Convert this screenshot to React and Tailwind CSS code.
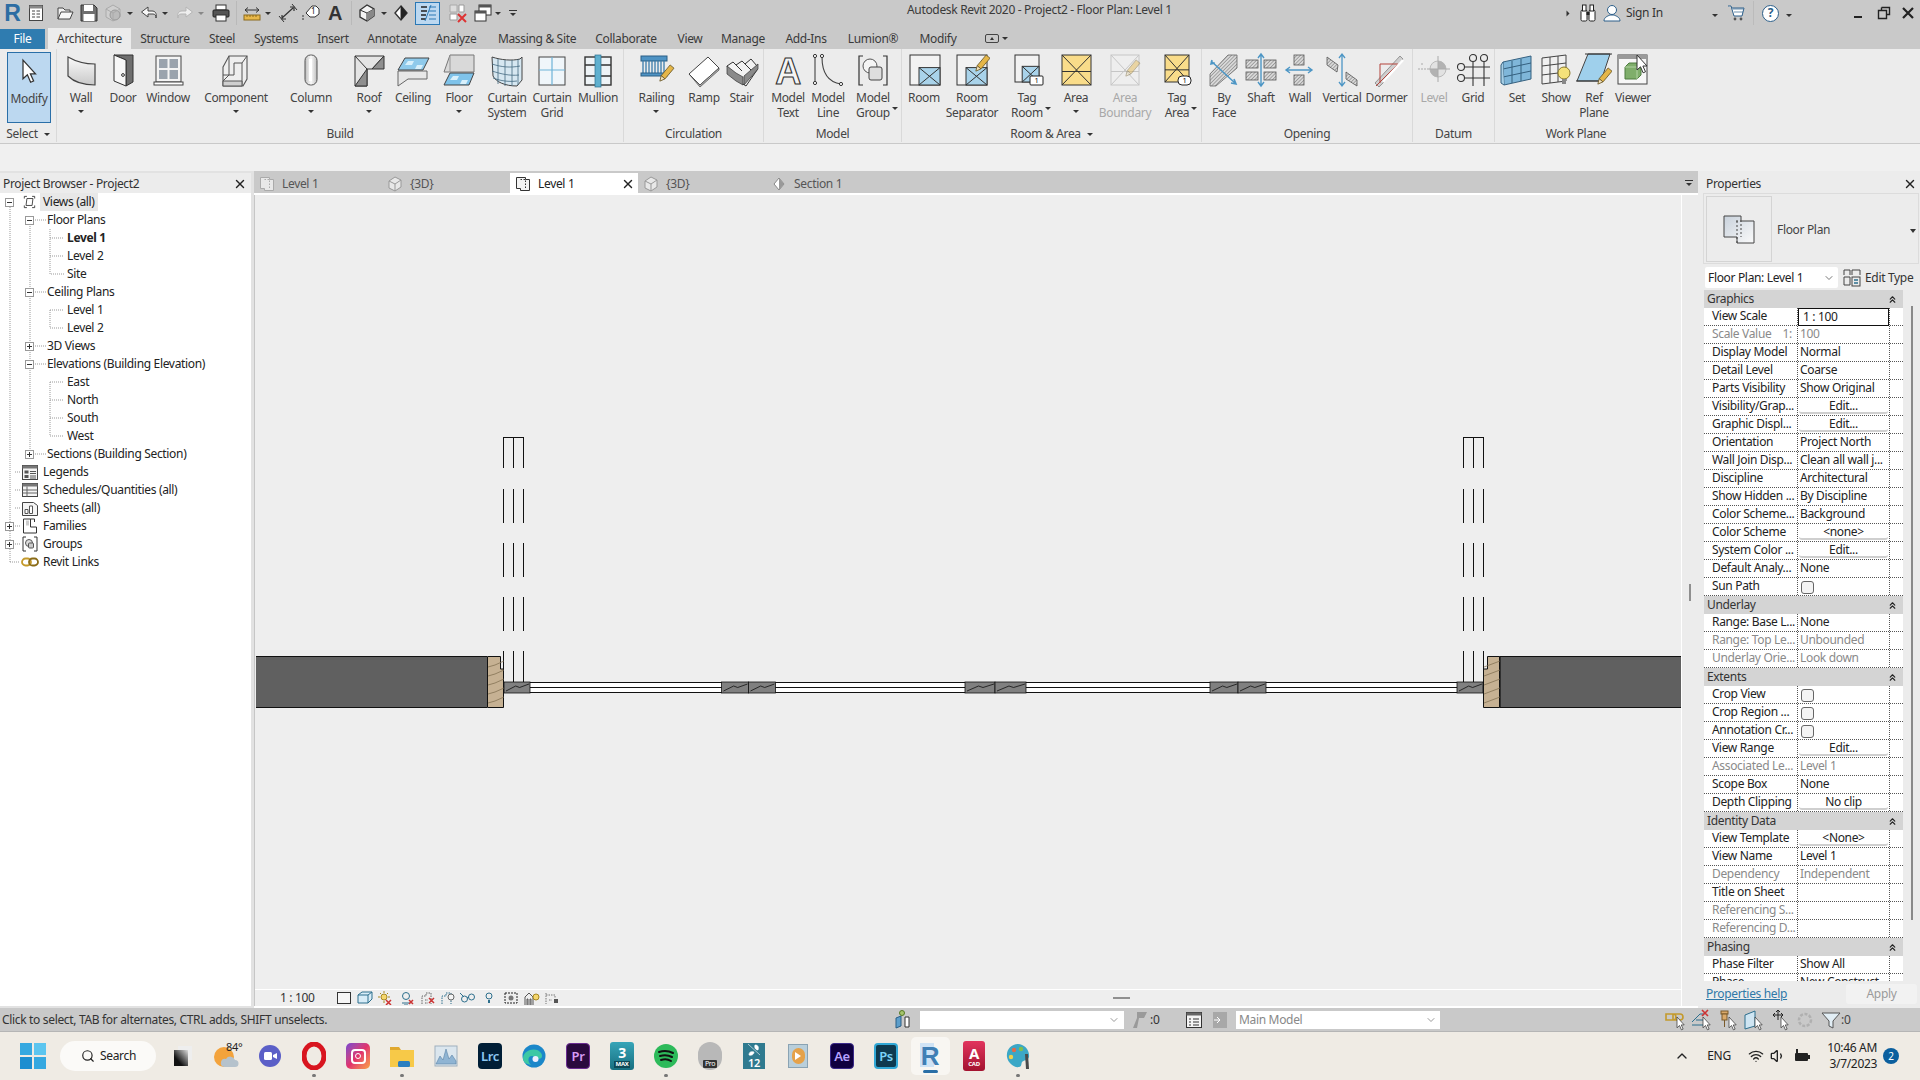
import { X, ChevronDown, ChevronUp, Search, Wifi, Volume1, ChevronsUp } from 'lucide-react'

// small shared bits for the svg icons
const Ico = ({ children, s = 36, v = 36, className = '' }) => (
  <svg width={s} height={s} viewBox={`0 0 ${v} ${v}`} className={`shrink-0 ${className}`}>{children}</svg>
)
const Pencil = ({ x = 0, y = 0 }) => (
  <g transform={`translate(${x} ${y}) rotate(40)`}>
    <rect x="-2.5" y="-11" width="5" height="14" fill="#e5b648" stroke="#6b5a2a" strokeWidth="0.8" />
    <path d="M-2.5 3L0 8l2.5-5z" fill="#f3e2bd" stroke="#6b5a2a" strokeWidth="0.8" />
  </g>
)
const Tag = ({ x, y, round }) => (
  <g>
    <rect x={x} y={y} width="13" height="9" rx={round ? 4 : 1} fill="#fff" stroke="#222" />
    <text x={x + 6.5} y={y + 7.2} fontSize="7.5" textAnchor="middle" fill="#111">1</text>
  </g>
)
const Hatch = (props) => <rect fill="url(#hatch)" stroke="#555" strokeWidth="0.8" {...props} />
const Cursor = ({ x = 0, y = 0, s = 1 }) => (
  <path transform={`translate(${x} ${y}) scale(${s})`} d="M0 0v15l3.5-3.2 2.6 6 2.4-1-2.6-5.8H10z" fill="#fff" stroke="#333" strokeWidth="1" />
)

const RoomBox = ({ x = 5, y = 4, w = 28, h = 29 }) => (
  <g>
    <rect x={x} y={y} width={w} height={h} fill="#f2f2f2" stroke="#333" />
    <rect x={x + w * 0.3} y={y + h * 0.42} width={w * 0.7} height={h * 0.58} fill="#a9d3ea" stroke="#333" />
    <path d={`M${x + w * 0.3} ${y + h * 0.42}L${x + w} ${y + h}M${x + w} ${y + h * 0.42}L${x + w * 0.3} ${y + h}`} stroke="#333" fill="none" />
  </g>
)
const AreaBox = ({ x = 5, y = 4, w = 28, h = 29, fill = '#f9dc8a', line = '#333' }) => (
  <g fill="none" stroke={line}>
    <rect x={x} y={y} width={w} height={h} fill={fill} />
    <path d={`M${x} ${y}L${x + w} ${y + h}M${x + w} ${y}L${x} ${y + h}M${x} ${y + h * 0.55}H${x + w}`} />
  </g>
)

const icons = {
  wall: <Ico><path d="M5 5c7 4 17 7 27 7v21c-10 0-21-3-27-9z" fill="url(#gl)" stroke="#444" strokeWidth="1.2" /></Ico>,
  door: (
    <Ico>
      <path d="M9 3h19v27l-7 4V8z" fill="#6e6e6e" stroke="#333" />
      <path d="M9 3l12 5v26L9 29z" fill="#f7f7f7" stroke="#333" />
      <circle cx="18" cy="23" r="1.4" fill="none" stroke="#333" />
    </Ico>
  ),
  window: (
    <Ico>
      <rect x="6" y="4" width="25" height="26" fill="#f4f4f4" stroke="#444" />
      <path d="M9 7h8.5v9H9zM19.5 7H28v9h-8.5zM9 18h8.5v9H9zM19.5 18H28v9h-8.5z" fill="#9aa3ad" />
      <rect x="4" y="30" width="29" height="3" fill="#fff" stroke="#444" />
    </Ico>
  ),
  component: (
    <Ico>
      <path d="M5 15l6-11h18v23l-4 7H5z" fill="#efefef" stroke="#555" strokeWidth="1.1" />
      <path d="M11 4v19H5M11 23l-6 6M24 11l5-7M24 11v23M24 11h-8v12h-5" fill="none" stroke="#555" />
      <path d="M5 29h19v5H5z" fill="#cfcfcf" stroke="#555" />
    </Ico>
  ),
  column: (
    <Ico>
      <rect x="12" y="3" width="12" height="30" rx="5.5" fill="url(#gh)" stroke="#555" />
      <rect x="16" y="7" width="3" height="22" fill="#fff" />
    </Ico>
  ),
  roof: (
    <Ico>
      <path d="M4 4h29L21 17l-5 0v17H4z" fill="#e4e4e4" stroke="#333" />
      <path d="M16 17l-12 17h12zM33 4v13l-12 0z" fill="#8f8f8f" stroke="#333" />
      <path d="M4 4l12 13" stroke="#333" />
    </Ico>
  ),
  ceiling: (
    <Ico>
      <path d="M3 19v15l10-7h19V19z" fill="#e7e7e7" stroke="#666" />
      <path d="M10 6h24l-6 12H3z" fill="#8fcaeb" stroke="#444" />
      <path d="M13 9h6l-2 4h-7zM22 13h6l-2 4h-6z" fill="#d8f0fb" />
    </Ico>
  ),
  floor: (
    <Ico>
      <path d="M9 3h24v17H3z" fill="#d9d9d9" stroke="#777" />
      <path d="M9 3v17" stroke="#999" />
      <path d="M9 21h24l-5 12H3z" fill="#7fc3ea" stroke="#444" />
      <path d="M12 24h6l-2 4h-7zM21 28h6l-2 4h-6z" fill="#d8f0fb" />
    </Ico>
  ),
  curtainSys: (
    <Ico>
      <path d="M3 5c9 3 20 4 28 2l2-2v23l-5 6C16 34 7 30 4 24z" fill="#d6e7f1" stroke="#444" />
      <path d="M9 7v25M16 8v26M23 8v26M29 7v26M3 12c9 3 18 4 28 2M3 19c9 3 18 5 27 4M4 26c8 3 16 4 24 3" fill="none" stroke="#446a80" strokeWidth="0.8" />
    </Ico>
  ),
  curtainGrid: (
    <Ico>
      <rect x="5" y="5" width="26" height="28" fill="#f0f6fa" stroke="#444" />
      <path d="M18 5v28M5 18h26" stroke="#6eb3d8" strokeWidth="1.2" />
    </Ico>
  ),
  mullion: (
    <Ico>
      <rect x="5" y="5" width="26" height="28" fill="#eef3f6" stroke="#333" strokeWidth="1.4" />
      <path d="M5 13h26M5 24h26" stroke="#333" strokeWidth="1.4" />
      <rect x="15" y="3" width="6" height="32" fill="#5fb0cf" stroke="#2d6f8d" strokeWidth="0.7" />
    </Ico>
  ),
  railing: (
    <Ico>
      <rect x="2" y="4" width="26" height="5" fill="#4e93c4" stroke="#2b5f85" />
      <path d="M4 9v12M7 9v12M10 9v12M13 9v12M16 9v12M19 9v12M22 9v12M25 9v12" stroke="#3a7cab" strokeWidth="1.3" />
      <rect x="2" y="21" width="26" height="3" fill="#4e93c4" stroke="#2b5f85" />
      <Pencil x="26" y="23" />
    </Ico>
  ),
  ramp: (
    <Ico>
      <path d="M3 22L22 5l11 11-19 17z" fill="#fff" stroke="#444" />
      <path d="M3 22l11 11 19-17v2L14 35z" fill="#b5b5b5" stroke="#444" strokeWidth="0.7" />
    </Ico>
  ),
  stair: (
    <Ico>
      <path d="M3 14l6-4 3 3 6-4 3 3 6-5 6 7v4l-11 16-6-4-9-7z" fill="#f2f2f2" stroke="#333" />
      <path d="M3 14v8l9 7 7 4v-8l-7-4zM20 24v9l14-16v-5z" fill="#8a8a8a" stroke="#333" strokeWidth="0.7" />
      <path d="M9 10l9 9M18 9l9 9" stroke="#333" fill="none" />
    </Ico>
  ),
  modelText: (
    <Ico s={36} v={36}>
      <text x="18" y="32" textAnchor="middle" fontSize="36" fontFamily="Liberation Sans, sans-serif" fontWeight="700" fill="#f5f5f5" stroke="#333" strokeWidth="1.1">A</text>
    </Ico>
  ),
  modelLine: (
    <Ico>
      <path d="M5 5v24M12 5c0 14 5 25 19 27" fill="none" stroke="#444" strokeWidth="1.1" />
      <circle cx="5" cy="4" r="1.6" fill="#fff" stroke="#333" />
      <circle cx="5" cy="31" r="1.6" fill="#fff" stroke="#333" />
      <circle cx="12" cy="4" r="1.6" fill="#fff" stroke="#333" />
      <circle cx="31" cy="32" r="1.6" fill="#fff" stroke="#333" />
    </Ico>
  ),
  modelGroup: (
    <Ico>
      <path d="M8 4H4v29h4M28 4h4v29h-4" fill="none" stroke="#333" strokeWidth="1.2" />
      <circle cx="15" cy="14" r="7" fill="#f5f5f5" stroke="#555" />
      <rect x="14" y="15" width="13" height="13" rx="2" fill="#dedede" stroke="#444" />
    </Ico>
  ),
  room: <Ico><RoomBox x={4} y={3} w={30} h={30} /></Ico>,
  roomSep: (
    <Ico>
      <RoomBox x={3} y={3} w={30} h={30} />
      <Pencil x="27" y="13" />
    </Ico>
  ),
  tagRoom: (
    <Ico>
      <RoomBox x={6} y={3} w={24} h={27} />
      <Tag x={21} y={24} />
    </Ico>
  ),
  area: <Ico><AreaBox x={4} y={3} w={29} h={30} /></Ico>,
  areaB: (
    <Ico>
      <AreaBox x={4} y={3} w={28} h={30} fill="#eeeeee" line="#c6c6c6" />
      <g opacity="0.45"><Pencil x="24" y="18" /></g>
    </Ico>
  ),
  tagArea: (
    <Ico>
      <AreaBox x={6} y={3} w={24} h={27} />
      <Tag x={19} y={24} round />
    </Ico>
  ),
  byFace: (
    <Ico>
      <path d="M22 3h9v13L10 34H4V22z" fill="url(#hatch)" stroke="#666" strokeWidth="0.8" />
      <path d="M5 9l24 22M6 8l-1 4 4-1M28 27l2 5-5-1" fill="none" stroke="#4d96c5" strokeWidth="1.6" />
    </Ico>
  ),
  shaft: (
    <Ico>
      <Hatch x="3" y="8" width="12" height="8" />
      <Hatch x="21" y="8" width="12" height="8" />
      <Hatch x="3" y="20" width="12" height="8" />
      <Hatch x="21" y="20" width="12" height="8" />
      <path d="M18 3v30M15 6l3-4 3 4M15 30l3 4 3-4" fill="none" stroke="#4d96c5" strokeWidth="1.4" />
    </Ico>
  ),
  wallO: (
    <Ico>
      <Hatch x="12" y="3" width="10" height="10" />
      <Hatch x="12" y="23" width="10" height="10" />
      <path d="M5 18h24M8 15l-4 3 4 3M26 15l4 3-4 3" fill="none" stroke="#4d96c5" strokeWidth="1.4" />
    </Ico>
  ),
  vertical: (
    <Ico>
      <path d="M3 5l11 8-1 7L3 13zM22 20l11 8v6l-11-7z" fill="url(#hatch)" stroke="#555" strokeWidth="0.8" />
      <path d="M18 3v30M15 6l3-4 3 4M15 30l3 4 3-4" fill="none" stroke="#4d96c5" strokeWidth="1.3" />
    </Ico>
  ),
  dormer: (
    <Ico>
      <path d="M6 31L31 4l3 3-19 23-5 5z" fill="#cfcfcf" stroke="#777" strokeWidth="0.7" />
      <path d="M11 12h18L7 34M11 12v19" fill="none" stroke="#b3433a" />
      <path d="M14 30L34 8" stroke="#fff" strokeWidth="2.5" />
    </Ico>
  ),
  level: (
    <Ico>
      <path d="M2 17h9M6 11v3" stroke="#aaa" strokeDasharray="2 1" />
      <circle cx="22" cy="17" r="8" fill="#e2e2e2" stroke="#bbb" />
      <path d="M22 9a8 8 0 0 1 8 8h-8zM22 17h-8a8 8 0 0 0 8 8z" fill="#b2b2b2" />
      <path d="M22 4v26M11 17h23" stroke="#aaa" />
    </Ico>
  ),
  grid: (
    <Ico>
      <g fill="none" stroke="#333" strokeWidth="1.1">
        <circle cx="18" cy="6" r="3.5" /><circle cx="29" cy="6" r="3.5" />
        <circle cx="6" cy="15" r="3.5" /><circle cx="6" cy="26" r="3.5" />
        <path d="M18 10v24M29 10v24M10 15h25M10 26h25" />
      </g>
    </Ico>
  ),
  set: (
    <Ico>
      <path d="M4 10l28-6v23L5 33z" fill="#7fb6d9" stroke="#35607f" />
      <path d="M13 9v22M22 7v22M4 17l28-6M4 25l28-6" stroke="#35607f" />
      <path d="M4 10l-2 3v18l3 2" fill="#a7cfe6" stroke="#35607f" />
    </Ico>
  ),
  show: (
    <Ico>
      <path d="M4 6l24-3v26L4 32z" fill="#f0f0f0" stroke="#444" />
      <path d="M12 5v26M20 4v26M4 14l24-3M4 23l24-3" stroke="#444" />
      <circle cx="26" cy="21" r="6" fill="#f5e27a" stroke="#8b7a2a" />
      <rect x="24" y="27" width="4" height="5" fill="#888" />
    </Ico>
  ),
  refPlane: (
    <Ico>
      <path d="M12 2h22l-9 27H1z" fill="#9fd0ec" stroke="#444" />
      <path d="M9 2h28M-1 29h28" stroke="#333" />
      <Pencil x="27" y="26" />
    </Ico>
  ),
  viewer: (
    <Ico>
      <rect x="3" y="3" width="29" height="29" fill="#f7f7f7" stroke="#444" />
      <rect x="3" y="3" width="29" height="4" fill="#9a9a9a" />
      <path d="M10 15l4-4h12v12l-4 4H10z" fill="#7fae6b" stroke="#4f7d40" />
      <path d="M10 15h12v12M22 15l4-4" fill="none" stroke="#b3d3a5" />
      <Cursor x="22" y="3" s="1" />
    </Ico>
  ),
}

const panels = [
  {
    title: 'Build', w: 'w-[567px]',
    tools: [
      { k: 'wall', l: ['Wall'], w: 'w-[48px]', arrow: true },
      { k: 'door', l: ['Door'], w: 'w-[36px]' },
      { k: 'window', l: ['Window'], w: 'w-[54px]' },
      { k: 'component', l: ['Component'], w: 'w-[82px]', arrow: true },
      { k: 'column', l: ['Column'], w: 'w-[68px]', arrow: true },
      { k: 'roof', l: ['Roof'], w: 'w-[48px]', arrow: true },
      { k: 'ceiling', l: ['Ceiling'], w: 'w-[40px]' },
      { k: 'floor', l: ['Floor'], w: 'w-[52px]', arrow: true },
      { k: 'curtainSys', l: ['Curtain', 'System'], w: 'w-[44px]' },
      { k: 'curtainGrid', l: ['Curtain', 'Grid'], w: 'w-[46px]' },
      { k: 'mullion', l: ['Mullion'], w: 'w-[46px]' },
    ],
  },
  {
    title: 'Circulation', w: 'w-[140px]',
    tools: [
      { k: 'railing', l: ['Railing'], w: 'w-[65px]', arrow: true },
      { k: 'ramp', l: ['Ramp'], w: 'w-[30px]' },
      { k: 'stair', l: ['Stair'], w: 'w-[45px]' },
    ],
  },
  {
    title: 'Model', w: 'w-[138px]',
    tools: [
      { k: 'modelText', l: ['Model', 'Text'], w: 'w-[48px]' },
      { k: 'modelLine', l: ['Model', 'Line'], w: 'w-[32px]' },
      { k: 'modelGroup', l: ['Model', 'Group'], w: 'w-[58px]', side: true },
    ],
  },
  {
    title: 'Room & Area', w: 'w-[300px]', more: true,
    tools: [
      { k: 'room', l: ['Room'], w: 'w-[44px]' },
      { k: 'roomSep', l: ['Room', 'Separator'], w: 'w-[52px]' },
      { k: 'tagRoom', l: ['Tag', 'Room'], w: 'w-[58px]', side: true },
      { k: 'area', l: ['Area'], w: 'w-[40px]', arrow: true },
      { k: 'areaB', l: ['Area', 'Boundary'], w: 'w-[58px]', dim: true },
      { k: 'tagArea', l: ['Tag', 'Area'], w: 'w-[46px]', side: true },
    ],
  },
  {
    title: 'Opening', w: 'w-[211px]',
    tools: [
      { k: 'byFace', l: ['By', 'Face'], w: 'w-[44px]' },
      { k: 'shaft', l: ['Shaft'], w: 'w-[30px]' },
      { k: 'wallO', l: ['Wall'], w: 'w-[48px]' },
      { k: 'vertical', l: ['Vertical'], w: 'w-[36px]' },
      { k: 'dormer', l: ['Dormer'], w: 'w-[53px]' },
    ],
  },
  {
    title: 'Datum', w: 'w-[82px]',
    tools: [
      { k: 'level', l: ['Level'], w: 'w-[42px]', dim: true },
      { k: 'grid', l: ['Grid'], w: 'w-[36px]' },
    ],
  },
  {
    title: 'Work Plane', w: 'w-[162px]', last: true,
    tools: [
      { k: 'set', l: ['Set'], w: 'w-[44px]' },
      { k: 'show', l: ['Show'], w: 'w-[34px]' },
      { k: 'refPlane', l: ['Ref', 'Plane'], w: 'w-[42px]' },
      { k: 'viewer', l: ['Viewer'], w: 'w-[36px]' },
    ],
  },
]

const Tri = ({ className = 'border-t-[#333]' }) => (
  <span className={`inline-block w-0 h-0 border-x-[3px] border-x-transparent border-t-[3px] ${className}`} />
)

const Tool = ({ tool }) => (
  <div className={`${tool.w} flex flex-col items-center pt-[3px] shrink-0 ${tool.dim ? 'text-[#a8a8a8]' : ''}`}>
    <div className="h-[36px] flex items-center justify-center">{icons[tool.k]}</div>
    <div className="mt-[2px] flex flex-col items-center leading-[15px] whitespace-nowrap relative">
      {tool.l.map((t) => <span key={t}>{t}</span>)}
      {tool.arrow && <span className="leading-[10px] -mt-[1px]"><Tri /></span>}
      {tool.side && <span className="absolute -right-[8px] top-[14px] leading-[4px]"><Tri /></span>}
    </div>
  </div>
)

const qatIcons = {
  sheet: <svg width="18" height="18" viewBox="0 0 18 18"><rect x="2.5" y="1.5" width="13" height="15" fill="#fff" stroke="#444" /><rect x="2.5" y="1.5" width="13" height="3" fill="#888" /><path d="M5 7h3M9.5 7H13M5 10h3M9.5 10H13M5 13h3M9.5 13H13" stroke="#444" /></svg>,
  open: <svg width="18" height="18" viewBox="0 0 18 18"><path d="M2 15V4h5l2 2h5v2" fill="#f1f1f1" stroke="#444" /><path d="M2 15l3-7h12l-3 7z" fill="#f7f7f7" stroke="#444" /></svg>,
  save: <svg width="20" height="20" viewBox="0 0 20 20"><path d="M2 2h13l3 3v13H2z" fill="#6f6f6f" stroke="#333" /><rect x="5" y="2" width="9" height="6" fill="#fff" /><rect x="4.5" y="11" width="11" height="7" fill="#fff" /></svg>,
  sync: <svg width="20" height="20" viewBox="0 0 20 20"><path d="M3 6l7-4 7 4v8l-7 4-7-4z" fill="#cfcfcf" stroke="#aaa" /><circle cx="12" cy="12" r="5" fill="#bbb" stroke="#999" /><path d="M3 6l7 4 7-4M10 10v8" stroke="#aaa" fill="none" /></svg>,
  undo: <svg width="18" height="18" viewBox="0 0 18 18"><path d="M8 3L1.5 8 8 13v-3h5c2 0 3 1.5 3 4 1-5-1-7-4-7H8z" fill="#f7f7f7" stroke="#444" /></svg>,
  redo: <svg width="18" height="18" viewBox="0 0 18 18"><path d="M10 3l6.5 5L10 13v-3H5c-2 0-3 1.5-3 4-1-5 1-7 4-7h4z" fill="#eee" stroke="#b5b5b5" /></svg>,
  print: <svg width="20" height="20" viewBox="0 0 20 20"><rect x="5" y="2" width="10" height="5" fill="#fff" stroke="#333" /><rect x="2" y="7" width="16" height="7" rx="1" fill="#555" stroke="#222" /><rect x="5" y="12" width="10" height="6" fill="#fff" stroke="#333" /></svg>,
  measure: <svg width="20" height="20" viewBox="0 0 20 20"><path d="M3 7h14M3 7l3-2.5M3 7l3 2.5M17 7l-3-2.5M17 7l-3 2.5" stroke="#333" fill="none" /><rect x="2" y="12" width="16" height="5" fill="#e8b84a" stroke="#8c6a1c" /><path d="M5 12v2M8 12v2M11 12v2M14 12v2" stroke="#8c6a1c" /></svg>,
  dim: <svg width="20" height="20" viewBox="0 0 20 20"><path d="M4 15L15 5M12 4h4v4M8 16H4v-4" fill="none" stroke="#333" strokeWidth="1.2" /><path d="M1 13l5 6M14 1l5 6" stroke="#333" /></svg>,
  tag: <svg width="20" height="20" viewBox="0 0 20 20"><path d="M2 17v-5" stroke="#333" strokeDasharray="2 1" /><path d="M5 10l6-7h4l3 3v5l-4 3H9z" fill="#fff" stroke="#333" /><text x="12" y="11" fontSize="8" textAnchor="middle" fill="#111">1</text></svg>,
  box: <svg width="20" height="20" viewBox="0 0 20 20"><path d="M3 7l7-5 7 4v7l-7 5-7-4z" fill="#f4f4f4" stroke="#333" strokeWidth="1.3" /><path d="M3 7l7 3 7-4M10 10v8" stroke="#333" fill="none" /><path d="M10 10l7-4v7l-7 5z" fill="#888" /></svg>,
  section: <svg width="20" height="20" viewBox="0 0 20 20"><path d="M10 3l6 7-6 7-6-7z" fill="#fff" stroke="#333" strokeWidth="1.4" /><path d="M10 3v14" stroke="#333" /><path d="M10 3l6 7-6 7z" fill="#222" /></svg>,
  hide: <svg width="20" height="20" viewBox="0 0 20 20"><path d="M2 2h7v7H2z" fill="#ddd" stroke="#aaa" /><path d="M11 2h5v7h-5zM2 11h7v6H2z" fill="#fff" stroke="#999" /><path d="M10 11l8 8M18 11l-8 8" stroke="#d33" strokeWidth="2" /></svg>,
  windows: <svg width="20" height="20" viewBox="0 0 20 20"><rect x="6" y="2" width="12" height="10" fill="#fff" stroke="#333" /><rect x="6" y="2" width="12" height="2.5" fill="#555" /><rect x="2" y="8" width="11" height="10" fill="#fff" stroke="#333" /><rect x="2" y="8" width="11" height="2.5" fill="#555" /></svg>,
}

const Qat = ({ className, children }) => (
  <div className={`flex items-center justify-center shrink-0 ${className}`}>{children}</div>
)

const TitleBar = () => (
  <div className="h-[28px] bg-[#c9c9c9] flex items-start shrink-0">
    <div className="w-[907px] h-[26px] flex items-center shrink-0">
      <Qat className="w-[24px] pl-[1px]">
        <span className="font-['Liberation_Sans',sans-serif] font-bold text-[23px] text-[#2d6da3] leading-none">R</span>
      </Qat>
      <Qat className="w-[24px]">{qatIcons.sheet}</Qat>
      <Qat className="w-[20px] ml-[7px]">{qatIcons.open}</Qat>
      <Qat className="w-[20px] ml-[4px]">{qatIcons.save}</Qat>
      <Qat className="w-[20px] ml-[4px]">{qatIcons.sync}</Qat>
      <Qat className="w-[6px] ml-[4px]"><Tri /></Qat>
      <Qat className="w-[20px] ml-[6px]">{qatIcons.undo}</Qat>
      <Qat className="w-[6px] ml-[3px]"><Tri /></Qat>
      <Qat className="w-[20px] ml-[7px]">{qatIcons.redo}</Qat>
      <Qat className="w-[6px] ml-[3px]"><Tri className="border-t-[#888]" /></Qat>
      <Qat className="w-[20px] ml-[7px]">{qatIcons.print}</Qat>
      <div className="w-[1px] h-[24px] bg-[#b9b9b9] ml-[5px]" />
      <Qat className="w-[20px] ml-[5px]">{qatIcons.measure}</Qat>
      <Qat className="w-[6px] ml-[3px]"><Tri /></Qat>
      <Qat className="w-[20px] ml-[7px]">{qatIcons.dim}</Qat>
      <Qat className="w-[20px] ml-[3px]">{qatIcons.tag}</Qat>
      <Qat className="w-[20px] ml-[4px]">
        <span className="font-['Liberation_Sans',sans-serif] font-bold text-[20px] leading-none text-[#333]">A</span>
      </Qat>
      <div className="w-[1px] h-[24px] bg-[#b9b9b9] ml-[6px]" />
      <Qat className="w-[20px] ml-[5px]">{qatIcons.box}</Qat>
      <Qat className="w-[6px] ml-[4px]"><Tri /></Qat>
      <Qat className="w-[20px] ml-[4px]">{qatIcons.section}</Qat>
      <Qat className="w-[25px] h-[23px] ml-[4px] bg-[#bcd8f0] border border-[#2a78b5]">
        <svg width="18" height="18" viewBox="0 0 18 18"><path d="M2 3h6M2 7h6M2 11h5M2 15h5" stroke="#222" strokeWidth="1.6" /><path d="M10 3h7M10 7h7M10 11h7M10 15h7M6 17L12 1" stroke="#2a78b5" strokeWidth="1" /></svg>
      </Qat>
      <Qat className="w-[20px] ml-[8px]">{qatIcons.hide}</Qat>
      <Qat className="w-[20px] ml-[5px]">{qatIcons.windows}</Qat>
      <Qat className="w-[6px] ml-[2px]"><Tri /></Qat>
      <Qat className="w-[10px] ml-[7px] flex-col gap-[2px]">
        <span className="w-[8px] h-[1px] bg-[#333]" />
        <Tri />
      </Qat>
    </div>
    <div className="text-[12px] leading-[20px] text-[#3a3a3a] whitespace-nowrap">Autodesk Revit 2020 - Project2 - Floor Plan: Level 1</div>
    <div className="ml-auto h-[26px] flex items-center">
      <Tri className="border-t-[#333] -rotate-90" />
      <svg width="20" height="20" viewBox="0 0 20 20" className="ml-[7px]"><rect x="3" y="7" width="6" height="11" rx="1.5" fill="#fff" stroke="#222" /><rect x="11" y="7" width="6" height="11" rx="1.5" fill="#fff" stroke="#222" /><rect x="4.5" y="2" width="3.5" height="6" fill="#fff" stroke="#222" /><rect x="12" y="2" width="3.5" height="6" fill="#fff" stroke="#222" /><rect x="8.5" y="9" width="3" height="3" fill="#222" /></svg>
      <svg width="20" height="20" viewBox="0 0 20 20" className="ml-[4px]"><circle cx="10" cy="7" r="4.5" fill="#fff" stroke="#2c5f8a" /><path d="M2 18c0-4 4-5 6-6h4c2 1 6 2 6 6z" fill="#fff" stroke="#2c5f8a" /></svg>
      <span className="ml-[4px] w-[92px] text-[12px] text-[#333]">Sign In</span>
      <span className="ml-[-6px] leading-[4px]"><Tri /></span>
      <svg width="20" height="20" viewBox="0 0 20 20" className="ml-[8px]"><path d="M2 3h3l3 10h8l2-8H6" fill="#fff" stroke="#2c5f8a" /><path d="M7 6h10M8 9h9" stroke="#2c5f8a" strokeWidth="0.7" /><circle cx="9" cy="16" r="1.4" fill="#555" /><circle cx="15" cy="16" r="1.4" fill="#555" /></svg>
      <div className="w-[1px] h-[24px] bg-[#bbb] ml-[7px]" />
      <div className="ml-[8px] w-[17px] h-[17px] rounded-full bg-white border border-[#2c5f8a] flex items-center justify-center text-[12px] font-bold text-[#2c5f8a] leading-none">?</div>
      <span className="ml-[7px] leading-[4px]"><Tri /></span>
      <div className="ml-[62px] w-[8px] h-[2px] bg-[#222] mt-[8px]" />
      <svg width="14" height="14" viewBox="0 0 14 14" className="ml-[15px]"><path d="M4.5 1.5h8v7h-3M1.5 4.5h8v8h-8zM4.5 1.5v3" fill="none" stroke="#222" strokeWidth="1.4" /></svg>
      <svg width="14" height="14" viewBox="0 0 14 14" className="ml-[10px] mr-[5px]"><path d="M2 2l10 10M12 2L2 12" stroke="#222" strokeWidth="2.2" /></svg>
    </div>
  </div>
)

const tabs = [
  ['Structure', 'w-[68px]'], ['Steel', 'w-[46px]'], ['Systems', 'w-[62px]'], ['Insert', 'w-[52px]'],
  ['Annotate', 'w-[66px]'], ['Analyze', 'w-[62px]'], ['Massing & Site', 'w-[100px]'], ['Collaborate', 'w-[78px]'],
  ['View', 'w-[50px]'], ['Manage', 'w-[56px]'], ['Add-Ins', 'w-[70px]'], ['Lumion®', 'w-[64px]'], ['Modify', 'w-[66px]'],
]

const TabBar = () => (
  <div className="h-[21px] bg-[#c9c9c9] flex items-stretch shrink-0 text-[12px] text-[#3a3a3a]">
    <div className="w-[45px] mt-[1px] bg-[#2f7cb0] text-white flex items-center justify-center">File</div>
    <div className="w-[83px] ml-[3px] bg-[#ececec] flex items-center justify-center">Architecture</div>
    {tabs.map(([t, w]) => (
      <div key={t} className={`${w} flex items-center justify-center whitespace-nowrap`}>{t}</div>
    ))}
    <div className="ml-[14px] flex items-center gap-[3px]">
      <span className="w-[14px] h-[9px] rounded-[2px] border border-[#444] flex items-center justify-center">
        <span className="w-0 h-0 border-x-[2px] border-x-transparent border-b-[3px] border-b-[#333]" />
      </span>
      <Tri />
    </div>
  </div>
)

const Panel = ({ p }) => (
  <div className={`${p.w} h-[93px] shrink-0 flex flex-col ${p.last ? '' : 'border-r border-[#d9d9d9]'}`}>
    <div className="h-[77px] flex">
      {p.tools.map((t) => <Tool key={t.k} tool={t} />)}
    </div>
    <div className="h-[16px] flex items-center justify-center gap-[6px] leading-[16px]">
      {p.title}
      {p.more && <Tri />}
    </div>
  </div>
)

const Ribbon = () => (
  <div className="h-[95px] bg-[#ececec] border-b border-[#c9c9c9] flex shrink-0 text-[12px] text-[#444]">
    <div className="w-[57px] h-[93px] shrink-0 flex flex-col border-r border-[#d9d9d9]">
      <div className="h-[77px] pl-[7px] pt-[3px]">
        <div className="w-[44px] h-[71px] bg-[#bcd8f0] border border-[#2a6fa8] flex flex-col items-center">
          <div className="h-[36px] flex items-center justify-center">
            <svg width="20" height="26" viewBox="0 0 20 26"><Cursor x={4} y={2} s={1.25} /></svg>
          </div>
          <span className="mt-[2px] leading-[15px]">Modify</span>
        </div>
      </div>
      <div className="h-[16px] flex items-center justify-center gap-[6px]">Select <Tri /></div>
    </div>
    {panels.map((p) => <Panel key={p.title} p={p} />)}
  </div>
)

// project browser
const PlanIcon = ({ dark }) => (
  <svg width="16" height="16" viewBox="0 0 16 16">
    <path d="M1.5 1.5h9v2h4v11h-9v-2h-4z" fill={dark ? '#f4f4f4' : '#e8e8e8'} stroke={dark ? '#333' : '#aaa'} />
    <path d="M5.5 3.5h5v9" fill="none" stroke={dark ? '#333' : '#aaa'} strokeDasharray="1.5 1.5" />
  </svg>
)
const Box3D = () => (
  <svg width="16" height="16" viewBox="0 0 16 16"><path d="M2 5l6-4 6 3v7l-6 4-6-3z" fill="#e8e8e8" stroke="#999" /><path d="M2 5l6 3 6-4M8 8v7" stroke="#999" fill="none" /></svg>
)
const SecIcon = () => (
  <svg width="16" height="16" viewBox="0 0 16 16"><path d="M8 2l5 6-5 6-5-6z" fill="#fff" stroke="#888" /><path d="M8 2l5 6-5 6z" fill="#999" /></svg>
)

const treeIcons = {
  views: <svg width="22" height="16" viewBox="0 0 22 16"><path d="M5 4V1.5h3M14 1.5h3V4M5 12v2.5h3M14 14.5h3V12" fill="none" stroke="#333" /><path d="M8 4h7l-1 8H7z" fill="none" stroke="#333" /></svg>,
  legends: <svg width="16" height="15" viewBox="0 0 16 15"><rect x=".5" y=".5" width="15" height="14" fill="#f4f4f4" stroke="#444" /><rect x=".5" y=".5" width="15" height="3" fill="#777" /><rect x="2.5" y="5.5" width="4" height="3" fill="#555" /><rect x="2.5" y="10" width="4" height="3" fill="#555" /><path d="M8 6.5h6M8 8.5h6M8 11h6M8 13h6" stroke="#555" /></svg>,
  schedules: <svg width="16" height="14" viewBox="0 0 16 14"><rect x=".5" y=".5" width="15" height="13" fill="#f4f4f4" stroke="#444" /><rect x=".5" y=".5" width="15" height="3" fill="#777" /><path d="M5 3.5v10M.5 7h15M.5 10h15" stroke="#666" /></svg>,
  sheets: <svg width="16" height="15" viewBox="0 0 16 15"><path d="M.5 1.5h11l4 3v10H.5z" fill="#f4f4f4" stroke="#444" /><path d="M3 8.5h3v4H3zM7.5 5h3v7.5h-3z" fill="#fff" stroke="#555" /></svg>,
  families: <svg width="14" height="16" viewBox="0 0 14 16"><path d="M.5 1h7v8h6v6H.5z" fill="none" stroke="#333" /><path d="M7.5 1h4v3" fill="none" stroke="#333" /><rect x="3" y="2.5" width="3" height="5" fill="#ccc" /></svg>,
  groups: <svg width="16" height="16" viewBox="0 0 16 16"><path d="M4 1H1v14h3M12 1h3v14h-3" fill="none" stroke="#333" /><circle cx="7" cy="7" r="3.5" fill="#ddd" stroke="#555" /><rect x="6.5" y="7" width="5" height="5" rx="1" fill="#ccc" stroke="#555" /></svg>,
  links: <svg width="18" height="10" viewBox="0 0 18 10"><rect x="1" y="1.5" width="9" height="7" rx="3.5" fill="none" stroke="#c49a2c" strokeWidth="1.8" /><rect x="8" y="1.5" width="9" height="7" rx="3.5" fill="none" stroke="#8a6b16" strokeWidth="1.8" /></svg>,
}

const tree = [
  { t: 'Views (all)', box: '-', bx: 'ml-[5px]', ic: 'views', pl: 'pl-[43px]', hl: true },
  { t: 'Floor Plans', box: '-', bx: 'ml-[25px]', pl: 'pl-[47px]' },
  { t: 'Level 1', pl: 'pl-[67px]', bold: true },
  { t: 'Level 2', pl: 'pl-[67px]' },
  { t: 'Site', pl: 'pl-[67px]' },
  { t: 'Ceiling Plans', box: '-', bx: 'ml-[25px]', pl: 'pl-[47px]' },
  { t: 'Level 1', pl: 'pl-[67px]' },
  { t: 'Level 2', pl: 'pl-[67px]' },
  { t: '3D Views', box: '+', bx: 'ml-[25px]', pl: 'pl-[47px]' },
  { t: 'Elevations (Building Elevation)', box: '-', bx: 'ml-[25px]', pl: 'pl-[47px]' },
  { t: 'East', pl: 'pl-[67px]' },
  { t: 'North', pl: 'pl-[67px]' },
  { t: 'South', pl: 'pl-[67px]' },
  { t: 'West', pl: 'pl-[67px]' },
  { t: 'Sections (Building Section)', box: '+', bx: 'ml-[25px]', pl: 'pl-[47px]' },
  { t: 'Legends', ic: 'legends', pl: 'pl-[43px]' },
  { t: 'Schedules/Quantities (all)', ic: 'schedules', pl: 'pl-[43px]' },
  { t: 'Sheets (all)', ic: 'sheets', pl: 'pl-[43px]' },
  { t: 'Families', box: '+', bx: 'ml-[5px]', ic: 'families', pl: 'pl-[43px]' },
  { t: 'Groups', box: '+', bx: 'ml-[5px]', ic: 'groups', pl: 'pl-[43px]' },
  { t: 'Revit Links', ic: 'links', pl: 'pl-[43px]' },
]

const TreeRow = ({ r }) => (
  <div className="h-[18px] relative flex items-center">
    {r.box && (
      <span className={`absolute left-0 ${r.bx} w-[9px] h-[9px] border border-[#999] bg-white flex items-center justify-center`}>
        <span className="absolute w-[5px] h-[1px] bg-[#333]" />
        {r.box === '+' && <span className="absolute w-[1px] h-[5px] bg-[#333]" />}
      </span>
    )}
    {r.ic && <span className="absolute left-[20px] w-[19px] flex justify-center">{treeIcons[r.ic]}</span>}
    <span className={`${r.pl} whitespace-nowrap`}>
      <span className={`inline-block ${r.hl ? 'bg-[#e8e8e8] px-[3px] -mx-[3px]' : ''} ${r.bold ? 'font-bold' : ''}`}>{r.t}</span>
    </span>
  </div>
)

const ProjectBrowser = () => (
  <div className="w-[251px] shrink-0 flex flex-col pt-[2px] pb-[2px] text-[12px] text-[#222]">
    <div className="h-[20px] bg-[#ececec] flex items-center justify-between pl-[3px] pr-[4px] pt-[2px] shrink-0 text-[#333]">
      <span>Project Browser - Project2</span>
      <X size={14} strokeWidth={2.4} color="#222" />
    </div>
    <div className="flex-1 bg-white relative">
      {/* dotted connectors of the tree */}
      <svg width="250" height="380" viewBox="0 0 250 380" className="absolute left-0 top-0" fill="none" stroke="#999" strokeDasharray="1 1">
        <path d="M10 14V369M30 27V261M50 36V81h14M50 45h14M50 63h14M50 117V135h14M50 117h14M50 189V243h14M50 189h14M50 207h14M50 225h14" />
        <path d="M35 27h11M35 99h11M35 153h11M35 171h11M35 261h11M15 279h5M15 297h5M15 315h5M15 333h5M15 351h5M10 369h10" />
      </svg>
      <div className="relative">
        {tree.map((r, i) => <TreeRow key={i} r={r} />)}
      </div>
    </div>
  </div>
)

const viewTabs = [
  { t: 'Level 1', ic: <PlanIcon /> },
  { t: '{3D}', ic: <Box3D /> },
  { t: 'Level 1', ic: <PlanIcon dark />, active: true },
  { t: '{3D}', ic: <Box3D /> },
  { t: 'Section 1', ic: <SecIcon /> },
]

const ViewTabs = () => (
  <div className="h-[22px] bg-[#c9c9c9] flex items-end text-[12px] shrink-0 pr-[3px]">
    {viewTabs.map((t, i) => (
      <div key={i} className={`w-[128px] h-[20px] flex items-center pl-[5px] pt-[2px] gap-[7px] ${t.active ? 'bg-white text-[#222]' : 'text-[#555]'}`}>
        {t.ic}
        <span>{t.t}</span>
        {t.active && <X size={14} strokeWidth={2.4} color="#222" className="ml-auto mr-[3px]" />}
      </div>
    ))}
    <div className="ml-auto h-[20px] flex flex-col items-center justify-center gap-[2px] pr-[2px]">
      <span className="w-[8px] h-[1px] bg-[#333]" />
      <Tri />
    </div>
  </div>
)

// the plan drawing, coordinates are page pixels
const Dashes = ({ xs, last }) => (
  <g stroke="#111" strokeWidth="1">
    {xs.map((x) => (
      <path key={x} d={`M${x} 437V468M${x} 489V523M${x} 543V577M${x} 597V631M${x} 651V${last}`} />
    ))}
    <path d={`M${xs[0]} 437.500H${xs[2]}`} />
  </g>
)
const Mull = ({ x, w }) => (
  <g>
    <rect x={x} y="682" width={w} height="11" fill="#808080" stroke="#111" strokeWidth="0.8" />
    <path d={`M${x + 2} 691L${x + w * 0.45} 686L${x + w * 0.6} 687.5L${x + w - 1} 684`} fill="none" stroke="#111" strokeWidth="0.8" />
  </g>
)
const Wood = ({ x, flip }) => (
  <g stroke="#7b6a4c" strokeWidth="0.7" fill="none">
    {[664, 673, 682, 691, 700].map((y) => (
      <path key={y} d={flip ? `M${x} ${y + 3}L${x + 8} ${y}L${x + 16} ${y - 3}` : `M${x} ${y + 3}L${x + 7} ${y + 1}L${x + 16} ${y - 3}`} />
    ))}
  </g>
)

const Plan = () => (
  <svg viewBox="255 195 1426 794" width="1426" height="794" className="block">
    <Dashes xs={[503.5, 513.5, 523.5]} last={682} />
    <Dashes xs={[1463.5, 1473.5, 1483.5]} last={682} />
    {/* walls */}
    <rect x="256" y="656" width="231" height="52" fill="#606060" />
    <path d="M256 656.5H487M256 707.500H487" stroke="#111" strokeWidth="1.2" />
    <rect x="1500" y="656" width="181" height="52" fill="#606060" />
    <path d="M1500 656.5H1681M1500 707.500H1681M1500 656V708" stroke="#111" strokeWidth="1.2" />
    {/* glazing */}
    <rect x="504" y="682" width="953" height="11" fill="#fff" />
    <path d="M504 682.5H1457M504 692.5H1457M504 687.500H1457" stroke="#111" strokeWidth="1" />
    <Mull x={504} w={26} />
    <Mull x={721.5} w={27} /><Mull x={748.5} w={27} />
    <Mull x={965} w={30} /><Mull x={995} w={31} />
    <Mull x={1210} w={28} /><Mull x={1238} w={28} />
    <Mull x={1457} w={26} />
    {/* wood jambs */}
    <path d="M487.5 656.5H500.5V669H503.5V707.500H487.5z" fill="#c6b193" stroke="#111" strokeWidth="1" />
    <Wood x={488} />
    <path d="M1487.5 656.5H1499.5V707.500H1483.5V669H1487.5z" fill="#c6b193" stroke="#111" strokeWidth="1" />
    <Wood x={1484} flip />
  </svg>
)

const ViewBar = () => (
  <div className="h-[16px] bg-[#eeeeee] flex items-center text-[12px] text-[#333] relative">
    <span className="ml-[25px] w-[57px] shrink-0">1 : 100</span>
    <svg width="14" height="12" viewBox="0 0 14 12" className="ml-[0px]"><rect x=".5" y=".5" width="13" height="11" fill="#f5f5f5" stroke="#333" /></svg>
    <svg width="16" height="14" viewBox="0 0 16 14" className="ml-[6px]"><path d="M1 4l4-3h10v7l-4 4H1z" fill="#d8ecf7" stroke="#2d6f8d" /><path d="M1 4h10v8M11 4l4-3" fill="none" stroke="#2d6f8d" /></svg>
    <svg width="14" height="14" viewBox="0 0 14 14" className="ml-[5px]"><circle cx="6" cy="6" r="3" fill="#f5d76e" stroke="#a88a22" /><path d="M6 0v2M0 6h2M10 6h2M6 10v2M2 2l1 1M10 2L9 3" stroke="#a88a22" /><path d="M8 9l5 5M13 9l-5 5" stroke="#c33" strokeWidth="1.5" /></svg>
    <svg width="14" height="14" viewBox="0 0 14 14" className="ml-[8px]"><circle cx="6" cy="5" r="3.5" fill="none" stroke="#2d6f8d" /><path d="M2 12h8M4 14h4" stroke="#2d6f8d" /><path d="M9 9l4 4M13 9l-4 4" stroke="#c33" strokeWidth="1.5" /></svg>
    <svg width="14" height="14" viewBox="0 0 14 14" className="ml-[7px]"><path d="M1 13V5h4V2h5v11M4 9h3M4 12h3" fill="none" stroke="#666" strokeDasharray="1.5 1" /><path d="M8 7l5 5M13 7l-5 5" stroke="#c33" strokeWidth="1.5" /></svg>
    <svg width="14" height="14" viewBox="0 0 14 14" className="ml-[6px]"><path d="M1 13V5h4V2h5v11" fill="none" stroke="#2d6f8d" strokeDasharray="1.5 1" /><circle cx="10" cy="6" r="3" fill="#f4f4f4" stroke="#666" /></svg>
    <svg width="16" height="12" viewBox="0 0 16 12" className="ml-[5px]"><circle cx="4.5" cy="7" r="3" fill="none" stroke="#2d6f8d" /><circle cx="11.5" cy="5" r="3" fill="none" stroke="#2d6f8d" /><path d="M0 1l4 4M7 6l2-1" stroke="#2d6f8d" /></svg>
    <svg width="8" height="14" viewBox="0 0 8 14" className="ml-[9px]"><circle cx="4" cy="5" r="3" fill="none" stroke="#2d6f8d" /><path d="M3 9h2v3H3z" fill="#2d6f8d" /></svg>
    <svg width="14" height="12" viewBox="0 0 14 12" className="ml-[11px]"><rect x="1" y="1" width="12" height="10" fill="none" stroke="#222" strokeDasharray="2 1" /><circle cx="7" cy="6" r="2.5" fill="#777" /></svg>
    <svg width="16" height="13" viewBox="0 0 16 13" className="ml-[6px]"><path d="M1 13V5l4-4 4 4v8M3 13V7h1v6M6 13V7h1v6" fill="none" stroke="#555" /><circle cx="12" cy="5" r="3" fill="#f5d76e" stroke="#a88a22" /></svg>
    <svg width="14" height="13" viewBox="0 0 14 13" className="ml-[5px]"><path d="M1 1v11M1 3h9v3M4 8h3" fill="none" stroke="#777" strokeDasharray="1.5 1" /><rect x="9" y="7" width="4" height="4" fill="#555" /></svg>
    <span className="absolute left-[858px] top-[7px] w-[17px] h-[2px] bg-[#8f8f8f]" />
  </div>
)

const ViewArea = () => (
  <div className="flex-1 min-w-0 flex flex-col">
    <ViewTabs />
    <div className="h-[2px] bg-white shrink-0" />
    <div className="flex-1 min-h-0 flex bg-[#eeeeee] border-l border-[#c6c6c6] overflow-hidden">
      <div className="w-[1426px] shrink-0 flex flex-col">
        <div className="h-[794px]"><Plan /></div>
        <div className="h-[1px] bg-white" />
        <ViewBar />
      </div>
      <div className="w-[1px] bg-white shrink-0" />
      <div className="flex-1 flex flex-col items-center bg-[#ececec]">
        <span className="mt-[389px] w-[2px] h-[17px] bg-[#8f8f8f]" />
      </div>
    </div>
    <div className="h-[2px] bg-white shrink-0" />
  </div>
)

// properties
const sections = [
  ['Graphics', [
    { n: 'View Scale', v: '1 : 100', t: 'box' },
    { n: 'Scale Value    1:', v: '100', dim: true },
    { n: 'Display Model', v: 'Normal' },
    { n: 'Detail Level', v: 'Coarse' },
    { n: 'Parts Visibility', v: 'Show Original' },
    { n: 'Visibility/Grap...', v: 'Edit...', t: 'btn' },
    { n: 'Graphic Displ...', v: 'Edit...', t: 'btn' },
    { n: 'Orientation', v: 'Project North' },
    { n: 'Wall Join Disp...', v: 'Clean all wall j...' },
    { n: 'Discipline', v: 'Architectural' },
    { n: 'Show Hidden ...', v: 'By Discipline' },
    { n: 'Color Scheme...', v: 'Background' },
    { n: 'Color Scheme', v: '<none>', t: 'btn' },
    { n: 'System Color ...', v: 'Edit...', t: 'btn' },
    { n: 'Default Analy...', v: 'None' },
    { n: 'Sun Path', t: 'check' },
  ]],
  ['Underlay', [
    { n: 'Range: Base L...', v: 'None' },
    { n: 'Range: Top Le...', v: 'Unbounded', dim: true },
    { n: 'Underlay Orie...', v: 'Look down', dim: true },
  ]],
  ['Extents', [
    { n: 'Crop View', t: 'check' },
    { n: 'Crop Region ...', t: 'check' },
    { n: 'Annotation Cr...', t: 'check' },
    { n: 'View Range', v: 'Edit...', t: 'btn' },
    { n: 'Associated Le...', v: 'Level 1', dim: true },
    { n: 'Scope Box', v: 'None' },
    { n: 'Depth Clipping', v: 'No clip', t: 'btn' },
  ]],
  ['Identity Data', [
    { n: 'View Template', v: '<None>', t: 'btn' },
    { n: 'View Name', v: 'Level 1' },
    { n: 'Dependency', v: 'Independent', dim: true },
    { n: 'Title on Sheet', v: '' },
    { n: 'Referencing S...', v: '', dim: true },
    { n: 'Referencing D...', v: '', dim: true },
  ]],
  ['Phasing', [
    { n: 'Phase Filter', v: 'Show All' },
    { n: 'Phase', v: 'New Construct' },
  ]],
]

const PropValue = ({ r }) => {
  if (r.t === 'box') return <div className="h-[18px] border border-[#111] bg-white pl-[4px] leading-[15px] text-[#222]">{r.v}</div>
  if (r.t === 'btn') return (
    <div className="mx-[1px] mt-[1px] h-[15px] rounded-[3px] bg-white border-b-2 border-[#cfcfcf] flex items-center justify-center text-[#222]">{r.v}</div>
  )
  if (r.t === 'check') return <div className="ml-[3px] mt-[3px] w-[13px] h-[13px] rounded-[3px] border border-[#666] bg-[#f4f4f4]" />
  return <div className="pl-[2px] leading-[16px] whitespace-nowrap overflow-hidden">{r.v}</div>
}

const PropRow = ({ r }) => (
  <div className={`h-[18px] flex border-b border-dotted border-[#555] bg-white ${r.dim ? 'text-[#8a8a8a]' : 'text-[#222]'}`}>
    <div className="w-[94px] shrink-0 border-r border-dotted border-[#555] pl-[8px] leading-[16px] whitespace-pre overflow-hidden">{r.n}</div>
    <div className="w-[92px] shrink-0 border-r border-dotted border-[#555]"><PropValue r={r} /></div>
    <div className="flex-1" />
  </div>
)

const Properties = () => (
  <div className="w-[218px] shrink-0 flex flex-col pt-[2px] text-[12px] text-[#333] bg-[#ececec]">
    <div className="h-[20px] flex items-center justify-between pl-[4px] pr-[3px] pt-[2px] shrink-0">
      <span>Properties</span>
      <X size={14} strokeWidth={2.4} color="#222" />
    </div>
    <div className="h-[71px] mx-[1px] border border-[#dcdcdc] flex items-center shrink-0 relative">
      <div className="w-[66px] h-[66px] ml-[2px] border border-[#d4d4d4] flex items-center justify-center">
        <svg width="32" height="32" viewBox="0 0 32 32">
          <path d="M1 3h17v5h13v22H14v-6H1z" fill="url(#gh2)" stroke="#444" />
          <path d="M13 8h5v16M14 8v22" fill="none" stroke="#444" strokeDasharray="2 2" />
        </svg>
      </div>
      <span className="ml-[5px] pt-[2px] text-[#444]">Floor Plan</span>
      <span className="ml-auto mr-[2px]"><Tri className="border-t-[#333] border-t-[4px]" /></span>
    </div>
    <div className="h-[26px] flex items-center pt-[1px] shrink-0">
      <div className="ml-[3px] w-[133px] h-[21px] bg-white flex items-center pl-[3px] text-[#222] rounded-[2px]">
        Floor Plan: Level 1
        <ChevronDown size={12} className="ml-auto mr-[3px] text-[#777]" />
      </div>
      <svg width="18" height="18" viewBox="0 0 18 18" className="ml-[5px]"><path d="M1 6V1h6v5M9 6V1h8v5M1 8h6v8H1z" fill="none" stroke="#444" /><rect x="9" y="8" width="8" height="9" fill="none" stroke="#444" /><path d="M11 11h4M11 14h4" stroke="#2d6f8d" strokeWidth="1.5" /></svg>
      <span className="ml-[4px] whitespace-nowrap">Edit Type</span>
    </div>
    <div className="flex-1 min-h-0 flex">
      <div className="w-[199px] ml-[2px] shrink-0 h-[691px] overflow-hidden">
        {sections.map(([title, rows]) => (
          <div key={title}>
            <div className="h-[18px] bg-[#d4d4d4] flex items-center justify-between pl-[3px] pr-[5px] text-[#333]">
              {title}
              <ChevronsUp size={11} strokeWidth={2.5} color="#222" />
            </div>
            {rows.map((r) => <PropRow key={r.n} r={r} />)}
          </div>
        ))}
      </div>
      <div className="flex-1 flex justify-center">
        <span className="mt-[16px] w-[2px] h-[614px] bg-[#8a8a8a]" />
      </div>
    </div>
  </div>
)

const PropFooter = () => (
  <div className="absolute left-0 bottom-[2px] w-[218px] h-[25px] bg-[#ececec] flex items-center text-[12px]">
    <a className="ml-[4px] text-[#2f78a8] underline">Properties help</a>
    <div className="ml-auto mr-[3px] w-[71px] h-[20px] bg-[#f2f2f2] rounded-[3px] flex items-center justify-center text-[#9a9a9a]">Apply</div>
  </div>
)

// status bar
const Cur = ({ children }) => (
  <svg width="24" height="22" viewBox="0 0 24 22" className="shrink-0">
    {children}
    <Cursor x={13} y={8} s={0.72} />
  </svg>
)

const StatusBar = () => (
  <div className="h-[24px] bg-[#c9c9c9] border-b border-[#b5b5b5] flex items-center shrink-0 text-[12px] text-[#333]">
    <span className="ml-[2px] w-[891px] pt-[1px] shrink-0 whitespace-nowrap">Click to select, TAB for alternates, CTRL adds, SHIFT unselects.</span>
    <svg width="20" height="20" viewBox="0 0 20 20"><path d="M3 8l5-2v10l-5 2z" fill="#5c9ecb" stroke="#2b5f85" /><path d="M12 7h4v10h-4z" fill="#fff" stroke="#333" /><circle cx="9" cy="3" r="2.5" fill="#a6c46c" stroke="#557a25" /></svg>
    <div className="ml-[7px] w-[204px] h-[18px] bg-white flex items-center justify-end pr-[4px]">
      <ChevronDown size={12} className="text-[#999]" />
    </div>
    <svg width="18" height="20" viewBox="0 0 18 20" className="ml-[7px]"><path d="M6 2h10l-3 6H6zM8 8l-2 10H2l4-10z" fill="#9a9a9a" /></svg>
    <span className="ml-[1px] w-[36px] pt-[1px]">:0</span>
    <svg width="16" height="16" viewBox="0 0 16 16"><rect x=".5" y=".5" width="15" height="15" fill="#f4f4f4" stroke="#333" /><rect x=".5" y=".5" width="15" height="3" fill="#666" /><path d="M3 7h2M7 7h6M3 10h2M7 10h6M3 13h2M7 13h6" stroke="#333" /></svg>
    <svg width="16" height="18" viewBox="0 0 16 18" className="ml-[10px]"><rect x="1" y="1" width="14" height="16" fill="#a8a8a8" /><path d="M2 9h6M5 6l3 3-3 3" stroke="#fff" fill="none" /></svg>
    <div className="ml-[8px] w-[204px] h-[18px] bg-white flex items-center pl-[3px] pt-[1px] text-[#888]">
      Main Model
      <ChevronDown size={12} className="ml-auto mr-[3px] text-[#999]" />
    </div>
    <div className="ml-[224px] flex items-center gap-[2px]">
      <Cur><path d="M2 5h7a3 3 0 0 1 0 6H2zM9 5h7a3 3 0 0 1 0 6H9z" fill="none" stroke="#c49a2c" strokeWidth="1.6" /></Cur>
      <Cur><path d="M2 13l8-8h4M2 16h12M6 11h8" fill="none" stroke="#2d6f8d" /><path d="M12 1l6 6M18 1l-6 6" stroke="#c33" strokeWidth="1.6" /></Cur>
      <Cur><rect x="5" y="2" width="7" height="3" fill="#d9a96a" stroke="#7a5a2a" /><rect x="6" y="5" width="5" height="6" fill="#d9a96a" stroke="#7a5a2a" /><path d="M8.5 11v7" stroke="#7a5a2a" /></Cur>
      <Cur><path d="M3 6l10-4v15l-10 3z" fill="#cfe5f2" stroke="#2d6f8d" /></Cur>
      <Cur><path d="M5 6h10M10 1v10M5 6l2-2M5 6l2 2M15 6l-2-2M15 6l-2 2M10 1L8 3M10 1l2 2" fill="none" stroke="#222" /></Cur>
      <svg width="20" height="20" viewBox="0 0 20 20" className="ml-[1px]"><circle cx="10" cy="10" r="6" fill="none" stroke="#b0b0b0" strokeWidth="2.5" strokeDasharray="3 1.5" /></svg>
      <svg width="20" height="20" viewBox="0 0 20 20" className="ml-[4px]"><path d="M1 3h18l-7 8v7l-4-2v-5z" fill="#e2eef5" stroke="#555" /></svg>
    </div>
    <span className="text-[#444] pt-[1px]">:0</span>
  </div>
)

// taskbar
const TbItem = ({ children, dot }) => (
  <div className="w-[44px] h-[48px] shrink-0 flex items-center justify-center relative">
    {children}
    {dot && <span className="absolute bottom-[3px] left-[20px] w-[4px] h-[3px] rounded-full bg-[#777]" />}
  </div>
)
const Sq = ({ className, children }) => (
  <div className={`w-[24px] h-[26px] rounded-[4px] flex items-center justify-center text-[13px] font-semibold leading-none ${className}`}>{children}</div>
)

const Taskbar = () => (
  <div className="h-[48px] bg-[#efebe4] flex items-center shrink-0 text-[#222] font-['Noto_Sans',sans-serif]">
    <div className="ml-[20px] w-[26px] grid grid-cols-2 gap-[2px] shrink-0">
      <span className="h-[12px] bg-[#35a8e0]" /><span className="h-[12px] bg-[#5cc5ef]" />
      <span className="h-[12px] bg-[#1c8ed0]" /><span className="h-[12px] bg-[#35a8e0]" />
    </div>
    <div className="ml-[14px] w-[96px] h-[30px] rounded-full bg-[#fbfaf8] flex items-center pl-[21px] gap-[5px] text-[12px] shrink-0">
      <Search size={14} color="#222" />
      Search
    </div>
    <div className="ml-[4px] flex">
      <TbItem>
        <svg width="24" height="24" viewBox="0 0 24 24"><rect x="8" y="2" width="14" height="14" fill="#eee" /><rect x="4" y="6" width="14" height="16" fill="url(#gk)" /></svg>
      </TbItem>
      <TbItem>
        <svg width="26" height="26" viewBox="0 0 26 26"><circle cx="11" cy="14" r="10" fill="#f3a33c" /><path d="M11 24h11a3.5 3.5 0 0 0 0-7 5 5 0 0 0-9-1 4 4 0 0 0-2 8z" fill="#b5c2cc" /></svg>
        <span className="absolute top-[7px] left-[22px] text-[11px] leading-[15px]">84°</span>
      </TbItem>
      <TbItem>
        <svg width="24" height="24" viewBox="0 0 24 24"><circle cx="12" cy="12" r="11" fill="#5b5fc7" /><rect x="6" y="8" width="8" height="8" rx="1.5" fill="#fff" /><path d="M15 11l4-2v6l-4-2z" fill="#fff" /></svg>
      </TbItem>
      <TbItem dot>
        <svg width="24" height="28" viewBox="0 0 24 28"><ellipse cx="12" cy="14" rx="10" ry="12" fill="none" stroke="#d8151f" strokeWidth="5" /></svg>
      </TbItem>
      <TbItem>
        <div className="w-[24px] h-[26px] rounded-[5px] bg-linear-to-br from-[#7a3fd0] via-[#e1306c] to-[#f9a03c] flex items-center justify-center">
          <span className="w-[15px] h-[15px] rounded-[4px] border-2 border-white flex items-center justify-center">
            <span className="w-[6px] h-[6px] rounded-full border-[1.5px] border-white" />
          </span>
        </div>
      </TbItem>
      <TbItem dot>
        <svg width="26" height="26" viewBox="0 0 26 26"><path d="M1 4h9l2 3H1z" fill="#e0a82e" /><rect x="1" y="7" width="24" height="17" fill="#f7c948" /><rect x="9" y="18" width="12" height="6" rx="1.5" fill="#2a7ec0" /></svg>
      </TbItem>
      <TbItem>
        <svg width="24" height="24" viewBox="0 0 24 24"><rect x="1" y="2" width="22" height="20" fill="#dbe6ee" stroke="#9fb0bd" /><path d="M2 20l4-8 3 4 3-11 3 10 3-4 4 6v3H2z" fill="#8fb4d3" stroke="#5b83a6" strokeWidth="0.6" /></svg>
      </TbItem>
      <TbItem><Sq className="bg-[#001e36] text-[#8cc7f2]">Lrc</Sq></TbItem>
      <TbItem>
        <svg width="26" height="26" viewBox="0 0 26 26"><circle cx="13" cy="13" r="11.5" fill="#1b87c9" /><path d="M2 15C3 6 16 4 20 10c2 3 1 6-3 6-4 0-3-3-6-3-4 0-5 5-1 9-5-1-8-3-8-7z" fill="#3dc8a4" /><circle cx="14.5" cy="16" r="3" fill="#eef" /></svg>
      </TbItem>
      <TbItem><Sq className="bg-[#2a0a3e] text-[#d79bf5] border border-[#6b2c91]">Pr</Sq></TbItem>
      <TbItem>
        <div className="w-[24px] h-[28px] rounded-[3px] bg-linear-to-b from-[#37a5b8] to-[#176f80] text-white flex flex-col items-center justify-center font-bold">
          <span className="text-[14px] leading-[16px]">3</span>
          <span className="text-[6px] leading-[7px] bg-[#0d4a57] px-[2px]">MAX</span>
        </div>
      </TbItem>
      <TbItem dot>
        <svg width="26" height="26" viewBox="0 0 26 26"><circle cx="13" cy="13" r="12" fill="#2dba5a" /><path d="M6 9c5-1.500 10-1 14 1M7 13c4-1 8-1 12 1M8 17c3-1 7-1 10 1" fill="none" stroke="#111" strokeWidth="2" strokeLinecap="round" /></svg>
      </TbItem>
      <TbItem>
        <div className="w-[24px] h-[28px] rounded-full bg-[#b8b8b8] flex items-end justify-center overflow-hidden relative">
          <span className="mb-[2px] bg-[#333] text-white text-[7px] leading-[8px] px-[2px] rounded-[1px]">Pro</span>
        </div>
      </TbItem>
      <TbItem>
        <div className="w-[22px] h-[26px] bg-[#2f7a8f] text-white flex flex-col items-center justify-end text-[11px] leading-[13px] font-semibold">
          <svg width="16" height="13" viewBox="0 0 16 13"><path d="M2 1l12 11M9 2c3 0 4 2 3 5-2 0-4-2-3-5zM3 12c0-3 2-4 5-3 0 2-2 4-5 3z" fill="#fff" stroke="#fff" strokeWidth="0.6" /></svg>
          12
        </div>
      </TbItem>
      <TbItem>
        <div className="w-[20px] h-[24px] bg-[#b9cfdb] border border-[#8aa3b3] flex items-center justify-center">
          <span className="w-[13px] h-[16px] rounded-full bg-[#e5a24a] flex items-center justify-center">
            <span className="w-0 h-0 border-y-[4px] border-y-transparent border-l-[6px] border-l-white" />
          </span>
        </div>
      </TbItem>
      <TbItem><Sq className="bg-[#0f0040] text-[#b6a3ff] border border-[#3b2a8a]">Ae</Sq></TbItem>
      <TbItem><Sq className="bg-[#0e3a4f] text-[#7cd3f7] border-2 border-[#31a8d6]">Ps</Sq></TbItem>
      <div className="w-[44px] h-[48px] shrink-0 flex items-center justify-center relative">
        <div className="w-[39px] h-[38px] rounded-[5px] bg-[#f8f6f2] flex items-center justify-center relative">
          <span className="w-[14px] h-[24px] bg-[#cfe3f5] absolute left-[9px] top-[6px]" />
          <span className="relative font-['Liberation_Sans',sans-serif] font-bold text-[26px] text-[#3f7fb5] leading-none">R</span>
          <span className="absolute bottom-[2px] left-[12px] w-[15px] h-[3px] rounded-full bg-[#2a6ea6]" />
        </div>
      </div>
      <TbItem>
        <div className="w-[22px] h-[30px] rounded-[3px] bg-linear-to-b from-[#e2345e] to-[#a3122f] text-white flex flex-col items-center justify-center font-bold">
          <span className="text-[15px] leading-[16px]">A</span>
          <span className="text-[6px] leading-[7px]">CAD</span>
        </div>
      </TbItem>
      <TbItem dot>
        <svg width="26" height="28" viewBox="0 0 26 28"><path d="M13 2C6 2 1 8 2 15c1 6 7 11 12 10 3-.5 2-3 3-5 1-2 6-1 7-5 1-7-5-13-11-13z" fill="#3ba7c6" /><circle cx="9" cy="8" r="2.200" fill="#e06a4b" /><circle cx="16" cy="7" r="2.200" fill="#7fbf4d" /><circle cx="6" cy="15" r="2.200" fill="#f2d04a" /><path d="M20 12l1 15h3l-1-15z" fill="#4a4a4a" /></svg>
      </TbItem>
    </div>
    <div className="ml-auto flex items-center text-[12px]">
      <ChevronUp size={16} color="#222" />
      <span className="ml-[17px] w-[32px]">ENG</span>
      <Wifi size={16} color="#222" className="ml-[9px]" />
      <Volume1 size={16} color="#222" className="ml-[6px]" />
      <svg width="18" height="16" viewBox="0 0 18 16" className="ml-[7px]"><rect x="2" y="5" width="13" height="8" rx="1" fill="#222" /><rect x="15" y="7" width="2" height="4" fill="#222" /><path d="M4 1v4" stroke="#222" strokeWidth="2" /></svg>
      <div className="ml-[16px] flex flex-col items-end leading-[16px] whitespace-nowrap">
        <span>10:46 AM</span>
        <span>3/7/2023</span>
      </div>
      <span className="ml-[6px] mr-[21px] w-[16px] h-[16px] rounded-full bg-[#0b5f9e] text-white text-[10px] flex items-center justify-center">2</span>
    </div>
  </div>
)

export default function App() {
  return (
    <div className="w-[1920px] h-[1080px] flex flex-col overflow-hidden bg-[#e6e6e6] font-['Noto_Sans',sans-serif] tracking-[-0.33px]">
      {/* gradients and hatch shared by the icons */}
      <svg width="0" height="0" className="absolute">
        <defs>
          <linearGradient id="gl" x1="0" y1="0" x2="0" y2="1"><stop offset="0" stopColor="#fafafa" /><stop offset="1" stopColor="#c9c9c9" /></linearGradient>
          <linearGradient id="gh" x1="0" y1="0" x2="1" y2="0"><stop offset="0" stopColor="#bdbdbd" /><stop offset="0.5" stopColor="#fafafa" /><stop offset="1" stopColor="#bdbdbd" /></linearGradient>
          <linearGradient id="gh2" x1="0" y1="0" x2="1" y2="1"><stop offset="0" stopColor="#c9d2dc" /><stop offset="1" stopColor="#fafafa" /></linearGradient>
          <linearGradient id="gk" x1="0" y1="1" x2="1" y2="0"><stop offset="0.3" stopColor="#111" /><stop offset="1" stopColor="#ddd" /></linearGradient>
          <pattern id="hatch" width="2.5" height="2.5" patternUnits="userSpaceOnUse" patternTransform="rotate(45)"><rect width="2.5" height="2.5" fill="#d9d9d9" /><path d="M0 0V2.500" stroke="#6c6c6c" strokeWidth="1" /></pattern>
        </defs>
      </svg>
      <TitleBar />
      <TabBar />
      <Ribbon />
      <div className="h-[27px] bg-[#f0f0f0] shrink-0" />
      <div className="h-[837px] flex shrink-0 overflow-hidden bg-[#e2e2e2]">
        <ProjectBrowser />
        <div className="w-[3px] shrink-0" />
        <ViewArea />
        <div className="relative w-[222px] shrink-0 flex justify-end bg-[#ececec]">
          <Properties />
          <div className="absolute right-0 bottom-0 w-[218px]"><PropFooter /></div>
        </div>
      </div>
      <StatusBar />
      <Taskbar />
    </div>
  )
}
